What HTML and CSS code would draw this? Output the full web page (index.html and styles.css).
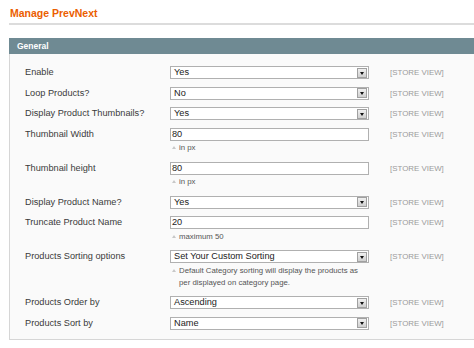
FILE: index.html
```html
<!DOCTYPE html>
<html>
<head>
<meta charset="utf-8">
<link rel="stylesheet" href="styles.css">
</head>
<body>
<div class="page">
  <div class="title">Manage PrevNext</div>
  <div class="section-head">General</div>
  <div class="panel">
    <div class="row">
      <div class="label">Enable</div>
      <div class="field"><div class="select"><span class="val">Yes</span><span class="btn"></span></div></div>
      <div class="scope">[STORE VIEW]</div>
    </div>
    <div class="row">
      <div class="label">Loop Products?</div>
      <div class="field"><div class="select"><span class="val">No</span><span class="btn"></span></div></div>
      <div class="scope">[STORE VIEW]</div>
    </div>
    <div class="row">
      <div class="label">Display Product Thumbnails?</div>
      <div class="field"><div class="select"><span class="val">Yes</span><span class="btn"></span></div></div>
      <div class="scope">[STORE VIEW]</div>
    </div>
    <div class="row">
      <div class="label">Thumbnail Width</div>
      <div class="field"><div class="input">80</div><div class="note">in px</div></div>
      <div class="scope">[STORE VIEW]</div>
    </div>
    <div class="row">
      <div class="label">Thumbnail height</div>
      <div class="field"><div class="input">80</div><div class="note">in px</div></div>
      <div class="scope">[STORE VIEW]</div>
    </div>
    <div class="row">
      <div class="label">Display Product Name?</div>
      <div class="field"><div class="select"><span class="val">Yes</span><span class="btn"></span></div></div>
      <div class="scope">[STORE VIEW]</div>
    </div>
    <div class="row">
      <div class="label">Truncate Product Name</div>
      <div class="field"><div class="input">20</div><div class="note">maximum 50</div></div>
      <div class="scope">[STORE VIEW]</div>
    </div>
    <div class="row">
      <div class="label">Products Sorting options</div>
      <div class="field"><div class="select"><span class="val">Set Your Custom Sorting</span><span class="btn"></span></div><div class="note">Default Category sorting will display the products as per displayed on category page.</div></div>
      <div class="scope">[STORE VIEW]</div>
    </div>
    <div class="row">
      <div class="label">Products Order by</div>
      <div class="field"><div class="select"><span class="val">Ascending</span><span class="btn"></span></div></div>
      <div class="scope">[STORE VIEW]</div>
    </div>
    <div class="row">
      <div class="label">Products Sort by</div>
      <div class="field"><div class="select"><span class="val">Name</span><span class="btn"></span></div></div>
      <div class="scope">[STORE VIEW]</div>
    </div>
  </div>
</div>
</body>
</html>
```
FILE: styles.css
```css
html, body {
  margin: 0;
  padding: 0;
  background: #ffffff;
}
body {
  font-family: "Liberation Sans", Arial, sans-serif;
  width: 474px;
  height: 348px;
  overflow: hidden;
}
.page {
  padding-left: 9px;
  width: 480px;
}
.title {
  padding: 7px 0 3px 1px;
  line-height: 13px;
  font-size: 10.5px;
  font-weight: bold;
  color: #eb5e00;
  border-bottom: 2px solid #dcdcdc;
}
.section-head {
  margin-top: 13px;
  height: 16px;
  line-height: 16px;
  background: #6f8a93;
  color: #ffffff;
  font-size: 8.5px;
  font-weight: bold;
  padding-left: 8px;
}
.panel {
  background: #fafafa;
  border: 1px solid #d6d6d6;
  border-top: none;
  padding: 8px 0 6px 15px;
}
.row {
  display: grid;
  grid-template-columns: 145px 199px auto;
  padding: 4px 0 3.5px;
}
.label {
  font-size: 9.2px;
  line-height: 13px;
  color: #3a3a3a;
}
.scope {
  margin-left: 21px;
  font-size: 7.9px;
  line-height: 13px;
  color: #9a9a9a;
}
.select, .input {
  box-sizing: border-box;
  height: 13px;
  border: 1px solid #b0b0b0;
  background: #ffffff;
  font-size: 9.2px;
  line-height: 11px;
  color: #222222;
}
.select {
  display: flex;
  align-items: center;
  padding-left: 3px;
  padding-right: 1px;
}
.input {
  padding-left: 1px;
}
.val {
  flex: 1;
}
.btn {
  box-sizing: border-box;
  width: 10px;
  height: 10px;
  border: 1px solid #a0a0a0;
  background: linear-gradient(#f0f0f0, #cfcfcf);
  position: relative;
}
.btn::after {
  content: "";
  position: absolute;
  left: 2px;
  top: 3px;
  border-left: 2px solid transparent;
  border-right: 2px solid transparent;
  border-top: 3px solid #111111;
}
.note {
  margin-top: 1.5px;
  font-size: 7.8px;
  line-height: 12px;
  color: #555555;
  padding-left: 9px;
  position: relative;
}
.note::before {
  content: "";
  position: absolute;
  left: 2px;
  top: 4px;
  border-left: 2px solid transparent;
  border-right: 2px solid transparent;
  border-bottom: 3px solid #c8c8c8;
}
```
